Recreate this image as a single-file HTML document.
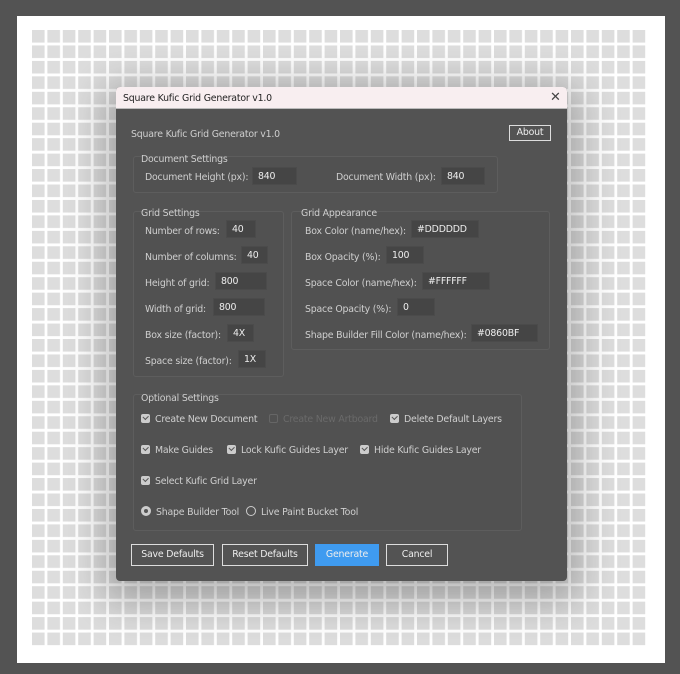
<!DOCTYPE html>
<html><head><meta charset="utf-8"><style>
*{margin:0;padding:0;box-sizing:border-box}
body{width:680px;height:674px;background:#535353;position:relative;overflow:hidden;font-family:"DejaVu Sans","Liberation Sans",sans-serif;font-size:9.4px;color:#cfcfcf;letter-spacing:-0.2px}
.a{position:absolute;white-space:nowrap}
.dlg > span.a{margin-top:1.5px}
.page{position:absolute;left:17px;top:16px;width:648px;height:647px;background:#fff}
.dlg{position:absolute;left:116px;top:87px;width:451px;height:494px;background:#535353;border-radius:4px;box-shadow:0 10px 40px 12px rgba(0,0,0,0.28);overflow:hidden}
.tb{position:absolute;left:0;top:0;width:451px;height:22px;background:#f8eef0;color:#222;border-bottom:1px solid #bbb}
.pn{position:absolute;border:1px solid #5d5d5d;border-radius:3px;background:#515151}
.in{position:absolute;height:18px;background:#454545;border:1px solid #4b4b4b;color:#eee;padding-left:5px;line-height:17px}
.btn{position:absolute;height:22px;border:1.5px solid #ddd;color:#eee;text-align:center;line-height:20px;background:#535353}
.cb{display:inline-block;width:9px;height:9px;background:#ccc;border-radius:2px;vertical-align:-1px;margin-right:5px;position:relative}
.cb:after{content:"";position:absolute;left:2px;top:1px;width:4px;height:2.5px;border-left:1.5px solid #555;border-bottom:1.5px solid #555;transform:rotate(-45deg)}
</style></head><body>
<div class="page"></div>
<svg class="a" style="left:0;top:0" width="680" height="674">
<defs><pattern id="g" x="32" y="30" width="15.4" height="15.45" patternUnits="userSpaceOnUse"><rect width="12.6" height="12.6" fill="#dddddd"/></pattern></defs>
<rect x="32" y="30" width="614" height="616" fill="url(#g)"/>
</svg>
<div class="dlg">
<div class="tb"><span class="a" style="left:7px;top:6px">Square Kufic Grid Generator v1.0</span><span class="a" style="left:434px;top:3px;font-size:13px;color:#444">✕</span></div>
<span class="a" style="left:15px;top:40px">Square Kufic Grid Generator v1.0</span>
<div class="btn" style="left:393px;top:38px;width:42px;height:16px;line-height:14px;border-width:1px">About</div>

<div class="pn" style="left:17px;top:69px;width:365px;height:37px"></div>
<span class="a" style="left:25px;top:65px">Document Settings</span>
<span class="a" style="left:29px;top:83px">Document Height (px):</span>
<div class="in" style="left:136px;top:80px;width:45px">840</div>
<span class="a" style="left:220px;top:83px">Document Width (px):</span>
<div class="in" style="left:325px;top:80px;width:44px">840</div>

<div class="pn" style="left:17px;top:124px;width:151px;height:166px"></div>
<span class="a" style="left:25px;top:119px">Grid Settings</span>
<span class="a" style="left:29px;top:137px">Number of rows:</span><div class="in" style="left:110px;top:133px;width:30px">40</div>
<span class="a" style="left:29px;top:163px">Number of columns:</span><div class="in" style="left:125px;top:159px;width:27px">40</div>
<span class="a" style="left:29px;top:189px">Height of grid:</span><div class="in" style="left:99px;top:185px;width:52px">800</div>
<span class="a" style="left:29px;top:215px">Width of grid:</span><div class="in" style="left:97px;top:211px;width:52px">800</div>
<span class="a" style="left:29px;top:241px">Box size (factor):</span><div class="in" style="left:111px;top:237px;width:27px">4X</div>
<span class="a" style="left:29px;top:267px">Space size (factor):</span><div class="in" style="left:122px;top:263px;width:28px">1X</div>

<div class="pn" style="left:175px;top:124px;width:259px;height:139px"></div>
<span class="a" style="left:185px;top:119px">Grid Appearance</span>
<span class="a" style="left:189px;top:137px">Box Color (name/hex):</span><div class="in" style="left:295px;top:133px;width:68px">#DDDDDD</div>
<span class="a" style="left:189px;top:163px">Box Opacity (%):</span><div class="in" style="left:270px;top:159px;width:38px">100</div>
<span class="a" style="left:189px;top:189px">Space Color (name/hex):</span><div class="in" style="left:306px;top:185px;width:68px">#FFFFFF</div>
<span class="a" style="left:189px;top:215px">Space Opacity (%):</span><div class="in" style="left:281px;top:211px;width:38px">0</div>
<span class="a" style="left:189px;top:241px">Shape Builder Fill Color (name/hex):</span><div class="in" style="left:355px;top:237px;width:67px">#0860BF</div>

<div class="pn" style="left:17px;top:307px;width:389px;height:137px"></div>
<span class="a" style="left:25px;top:304px">Optional Settings</span>
<span class="a" style="left:25px;top:325px"><span class="cb"></span>Create New Document</span>
<span class="a" style="left:153px;top:325px;color:#6a6a6a"><span style="display:inline-block;width:9px;height:9px;border:1px solid #666;border-radius:2px;vertical-align:-1px;margin-right:5px"></span>Create New Artboard</span>
<span class="a" style="left:274px;top:325px"><span class="cb"></span>Delete Default Layers</span>
<span class="a" style="left:25px;top:356px"><span class="cb"></span>Make Guides</span>
<span class="a" style="left:111px;top:356px"><span class="cb"></span>Lock Kufic Guides Layer</span>
<span class="a" style="left:244px;top:356px"><span class="cb"></span>Hide Kufic Guides Layer</span>
<span class="a" style="left:25px;top:387px"><span class="cb"></span>Select Kufic Grid Layer</span>
<span class="a" style="left:25px;top:417px"><span style="display:inline-block;width:10px;height:10px;border-radius:50%;background:#ccc;vertical-align:-1px;margin-right:5px;position:relative"><span style="position:absolute;left:3px;top:3px;width:4px;height:4px;border-radius:50%;background:#555"></span></span>Shape Builder Tool</span>
<span class="a" style="left:130px;top:417px"><span style="display:inline-block;width:10px;height:10px;border-radius:50%;border:1px solid #ccc;vertical-align:-1px;margin-right:5px"></span>Live Paint Bucket Tool</span>

<div class="btn" style="left:15px;top:457px;width:83px">Save Defaults</div>
<div class="btn" style="left:106px;top:457px;width:86px">Reset Defaults</div>
<div class="btn" style="left:199px;top:457px;width:64px;background:#3f9bf0;border-color:#3f9bf0">Generate</div>
<div class="btn" style="left:270px;top:457px;width:62px">Cancel</div>
</div>
</body></html>
